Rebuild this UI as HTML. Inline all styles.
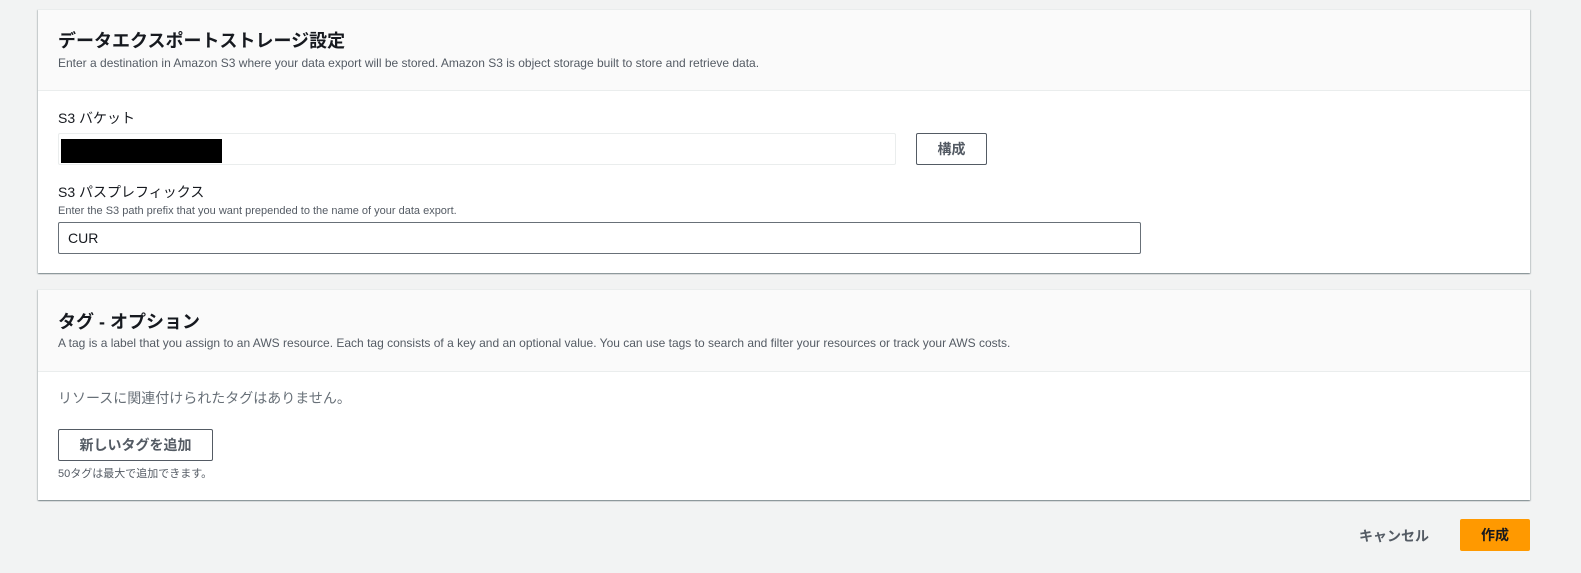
<!DOCTYPE html>
<html><head><meta charset="utf-8"><style>
body{margin:0;width:1581px;height:573px;background:#f2f3f3;font-family:"Liberation Sans","Noto Sans CJK JP",sans-serif;color:#16191f;position:relative;overflow:hidden}
.p{position:absolute;left:38px;width:1492px;background:#fff;box-shadow:0 1px 1px 0 rgba(0,28,36,.3),1px 1px 1px 0 rgba(0,28,36,.15),-1px 1px 1px 0 rgba(0,28,36,.15);border-top:1px solid #eaeded}
.h{background:#fafafa;border-bottom:1px solid #eaeded;position:absolute;left:0;right:0;top:0}
.t{position:absolute;left:20px;font-size:18px;font-weight:bold}
.d{position:absolute;left:20px;font-size:12px;color:#545b64}
.a{position:absolute;font-size:14px}
.in{position:absolute;border:1px solid #aab7b8;border-radius:2px;box-sizing:border-box;background:#fff}
.btn{position:absolute;border:1px solid #545b64;border-radius:2px;box-sizing:border-box;background:#fff;font-size:14px;font-weight:bold;color:#545b64;text-align:center}
</style></head><body>
<div class="p" style="top:9px;height:263px">
 <div class="h" style="height:80px">
  <div class="t" style="top:17px">データエクスポートストレージ設定</div>
  <div class="d" style="top:46px">Enter a destination in Amazon S3 where your data export will be stored. Amazon S3 is object storage built to store and retrieve data.</div>
 </div>
 <div class="a" style="left:20px;top:98px">S3 バケット</div>
 <div class="in" style="left:20px;top:123px;width:838px;height:32px;border-color:#eaeded"><div style="position:absolute;left:2px;top:5px;width:161px;height:24px;background:#000"></div></div>
 <div class="btn" style="left:878px;top:123px;width:71px;height:32px;line-height:30px">構成</div>
 <div class="a" style="left:20px;top:172px">S3 パスプレフィックス</div>
 <div class="d" style="top:195px;font-size:11px">Enter the S3 path prefix that you want prepended to the name of your data export.</div>
 <div class="in" style="left:20px;top:212px;width:1083px;height:32px;border-color:#687078;font-size:14px;line-height:30px;padding-left:9px">CUR</div>
</div>
<div class="p" style="top:289px;height:210px">
 <div class="h" style="height:81px">
  <div class="t" style="top:18px">タグ - オプション</div>
  <div class="d" style="top:46px">A tag is a label that you assign to an AWS resource. Each tag consists of a key and an optional value. You can use tags to search and filter your resources or track your AWS costs.</div>
 </div>
 <div class="a" style="left:20px;top:98px;color:#687078">リソースに関連付けられたタグはありません。</div>
 <div class="btn" style="left:20px;top:139px;width:155px;height:32px;line-height:30px">新しいタグを追加</div>
 <div class="d" style="top:175px;font-size:11px">50タグは最大で追加できます。</div>
</div>
<div style="position:absolute;left:1359px;top:526px;font-size:14px;font-weight:bold;color:#545b64">キャンセル</div>
<div style="position:absolute;left:1460px;top:519px;width:70px;height:32px;background:#ff9900;border-radius:2px;text-align:center;line-height:32px;font-size:14px;font-weight:bold;color:#16191f">作成</div>
</body></html>
